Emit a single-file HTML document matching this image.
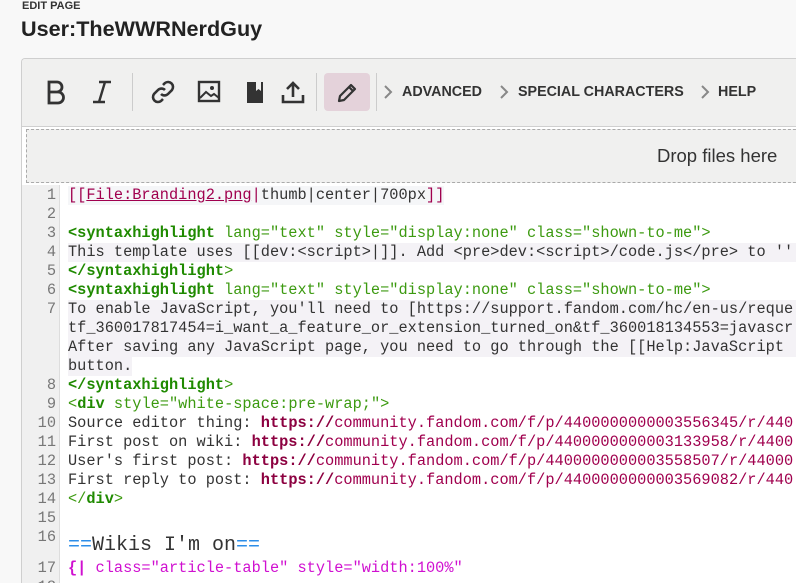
<!DOCTYPE html>
<html><head><meta charset="utf-8"><style>
*{margin:0;padding:0;box-sizing:border-box}
html,body{width:796px;height:583px;overflow:hidden}
body{background:#f8f8f8;font-family:"Liberation Sans",sans-serif;position:relative}
.ep{position:absolute;left:22px;top:0px;font-size:11px;font-weight:bold;color:#333}
.title{position:absolute;left:21px;top:16px;font-size:21.6px;font-weight:bold;color:#222}
.ed{position:absolute;left:21px;top:58px;width:775px;height:525px;border:1px solid #cfcfcf;border-right:none;border-bottom:none;border-radius:4px 0 0 0;background:#fff;overflow:hidden}
.tb{position:absolute;left:0;top:0;width:100%;height:68px;background:#f0f0ef;border-bottom:1px solid #cfcfcf}
.drop{position:absolute;left:4px;top:70px;width:800px;height:54px;background:#f0f0ef;border-top:1px dashed #aaa;border-bottom:1px dashed #aaa;border-left:1px dashed #aaa}
.drop span{position:absolute;left:630px;top:15px;font-size:18.5px;color:#333}
.ic{position:absolute;top:20px}
.sep{position:absolute;top:14px;width:1px;height:38px;background:#ccc}
.lbl{position:absolute;top:25px;font-size:14.3px;font-weight:bold;color:#333;white-space:nowrap}
.chev{position:absolute;top:25px}
.gut{position:absolute;left:0;top:126px;width:38px;height:400px;background:#f0f0f0;border-right:1px solid #ddd}
.code{position:absolute;left:0;top:0;width:796px;height:583px;overflow:hidden;font-family:"Liberation Mono",monospace;font-size:15.3px;pointer-events:none}
.ln{position:absolute;left:22px;width:34px;text-align:right;color:#777;white-space:pre;height:19px;line-height:19px}
.l{position:absolute;left:68px;white-space:pre;height:19px;line-height:19px;color:#333}
.bg{background:#f4f2f6}
.t{color:#1f8a00;font-weight:bold}.a{color:#3c9a10}
.m{color:#a0004e}.mb{color:#8c0040;font-weight:bold}
.h{color:#2b8de8}.p{color:#d010d0}
</style></head><body>
<div class="ep">EDIT PAGE</div>
<div class="title">User:TheWWRNerdGuy</div>
<div class="ed">
 <div class="tb">
  <svg class="ic" style="left:22px" width="24" height="26" viewBox="0 0 24 26"><path d="M5 3h8a5 5 0 0 1 0 10H5zM5 13h9a5.5 5.5 0 0 1 0 11H5z" fill="none" stroke="#333" stroke-width="2.8"/></svg>
  <svg class="ic" style="left:68px" width="24" height="26" viewBox="0 0 24 26"><path d="M9 3h12M3 23h12M15 3L9 23" fill="none" stroke="#333" stroke-width="2.4"/></svg>
  <div class="sep" style="left:110px"></div>
  <svg class="ic" style="left:128px" width="26" height="26" viewBox="0 0 26 26"><path d="M11 15a5 5 0 0 0 7 0l4-4a5 5 0 0 0-7-7l-2 2M15 11a5 5 0 0 0-7 0l-4 4a5 5 0 0 0 7 7l2-2" fill="none" stroke="#333" stroke-width="2.6"/></svg>
  <svg class="ic" style="left:175px" width="24" height="26" viewBox="0 0 24 26"><rect x="2" y="3" width="20" height="19" fill="none" stroke="#333" stroke-width="2.4"/><path d="M3 19l6-6 5 4 3-2 5 4" fill="none" stroke="#333" stroke-width="2"/><circle cx="15" cy="9" r="2" fill="#333"/></svg>
  <svg class="ic" style="left:222px" width="22" height="26" viewBox="0 0 22 26"><path d="M3 3h16v21H3z" fill="#333"/><path d="M12 3v9l2.5-2 2.5 2V3z" fill="#f0f0ef"/></svg>
  <svg class="ic" style="left:258px" width="26" height="26" viewBox="0 0 26 26"><path d="M3 16v7h20v-7M13 18V4M7 10l6-6 6 6" fill="none" stroke="#333" stroke-width="2.6"/></svg>
  <div class="sep" style="left:294px"></div>
  <div style="position:absolute;left:302px;top:14px;width:46px;height:38px;background:#e4d2da;border-radius:4px"></div>
  <svg class="ic" style="left:313px;top:22px" width="24" height="24" viewBox="0 0 24 24"><path d="M4 20l1-5L16 4l4 4L9 19z M14 6l4 4" fill="none" stroke="#333" stroke-width="2.2" stroke-linejoin="round"/></svg>
  <div class="sep" style="left:354px"></div>
  <svg class="chev" style="left:361px" width="10" height="16" viewBox="0 0 10 16"><path d="M2 2l6 6-6 6" fill="none" stroke="#888" stroke-width="2"/></svg>
  <div class="lbl" style="left:380px">ADVANCED</div>
  <svg class="chev" style="left:477px" width="10" height="16" viewBox="0 0 10 16"><path d="M2 2l6 6-6 6" fill="none" stroke="#888" stroke-width="2"/></svg>
  <div class="lbl" style="left:496px">SPECIAL CHARACTERS</div>
  <svg class="chev" style="left:678px" width="10" height="16" viewBox="0 0 10 16"><path d="M2 2l6 6-6 6" fill="none" stroke="#888" stroke-width="2"/></svg>
  <div class="lbl" style="left:696px">HELP</div>
 </div>
 <div class="drop"><span>Drop files here</span></div>
 <div class="gut"></div>
</div>
<div class="code">
<div class="ln" style="top:186px">1</div><div class="l" style="top:186px;background:#f5f6f8"><span class="m">[[<u>File:Branding2.png</u>|</span>thumb|center|700px<span class="m">]]</span></div>
<div class="ln" style="top:205px">2</div>
<div class="ln" style="top:224px">3</div><div class="l" style="top:224px"><span class="t">&lt;syntaxhighlight</span><span class="a"> lang="text" style="display:none" class="shown-to-me"&gt;</span></div>
<div class="ln" style="top:243px">4</div><div class="l bg" style="top:243px;width:728px;overflow:hidden">This template uses [[dev:&lt;script&gt;|]]. Add &lt;pre&gt;dev:&lt;script&gt;/code.js&lt;/pre&gt; to ''</div>
<div class="ln" style="top:262px">5</div><div class="l" style="top:262px"><span class="t">&lt;/syntaxhighlight</span><span class="a">&gt;</span></div>
<div class="ln" style="top:281px">6</div><div class="l" style="top:281px"><span class="t">&lt;syntaxhighlight</span><span class="a"> lang="text" style="display:none" class="shown-to-me"&gt;</span></div>
<div class="ln" style="top:300px">7</div><div class="l bg" style="top:300px;width:728px;overflow:hidden">To enable JavaScript, you'll need to [https://support.fandom.com/hc/en-us/reque</div>
<div class="l bg" style="top:319px;width:728px;overflow:hidden">tf_360017817454=i_want_a_feature_or_extension_turned_on&amp;tf_360018134553=javascr</div>
<div class="l bg" style="top:338px;width:728px;overflow:hidden">After saving any JavaScript page, you need to go through the [[Help:JavaScript </div>
<div class="l bg" style="top:357px">button.</div>
<div class="ln" style="top:376px">8</div><div class="l" style="top:376px"><span class="t">&lt;/syntaxhighlight</span><span class="a">&gt;</span></div>
<div class="ln" style="top:395px">9</div><div class="l" style="top:395px"><span class="a">&lt;</span><span class="t">div</span><span class="a"> style="white-space:pre-wrap;"&gt;</span></div>
<div class="ln" style="top:414px">10</div><div class="l" style="top:414px">Source editor thing: <span class="mb">https://</span><span class="m">community.fandom.com/f/p/4400000000003556345/r/440</span></div>
<div class="ln" style="top:433px">11</div><div class="l" style="top:433px">First post on wiki: <span class="mb">https://</span><span class="m">community.fandom.com/f/p/4400000000003133958/r/4400</span></div>
<div class="ln" style="top:452px">12</div><div class="l" style="top:452px">User's first post: <span class="mb">https://</span><span class="m">community.fandom.com/f/p/4400000000003558507/r/44000</span></div>
<div class="ln" style="top:471px">13</div><div class="l" style="top:471px">First reply to post: <span class="mb">https://</span><span class="m">community.fandom.com/f/p/4400000000003569082/r/440</span></div>
<div class="ln" style="top:490px">14</div><div class="l" style="top:490px"><span class="a">&lt;/</span><span class="t">div</span><span class="a">&gt;</span></div>
<div class="ln" style="top:509px">15</div>
<div class="ln" style="top:528px">16</div><div class="l" style="top:532px;font-size:20px;height:28px;line-height:28px"><span class="h">==</span>Wikis I'm on<span class="h">==</span></div>
<div class="ln" style="top:559px">17</div><div class="l p" style="top:559px"><b>{|</b> class="article-table" style="width:100%"</div>
<div class="ln" style="top:578px;height:5px;overflow:hidden">18</div>
</div>
</body></html>
